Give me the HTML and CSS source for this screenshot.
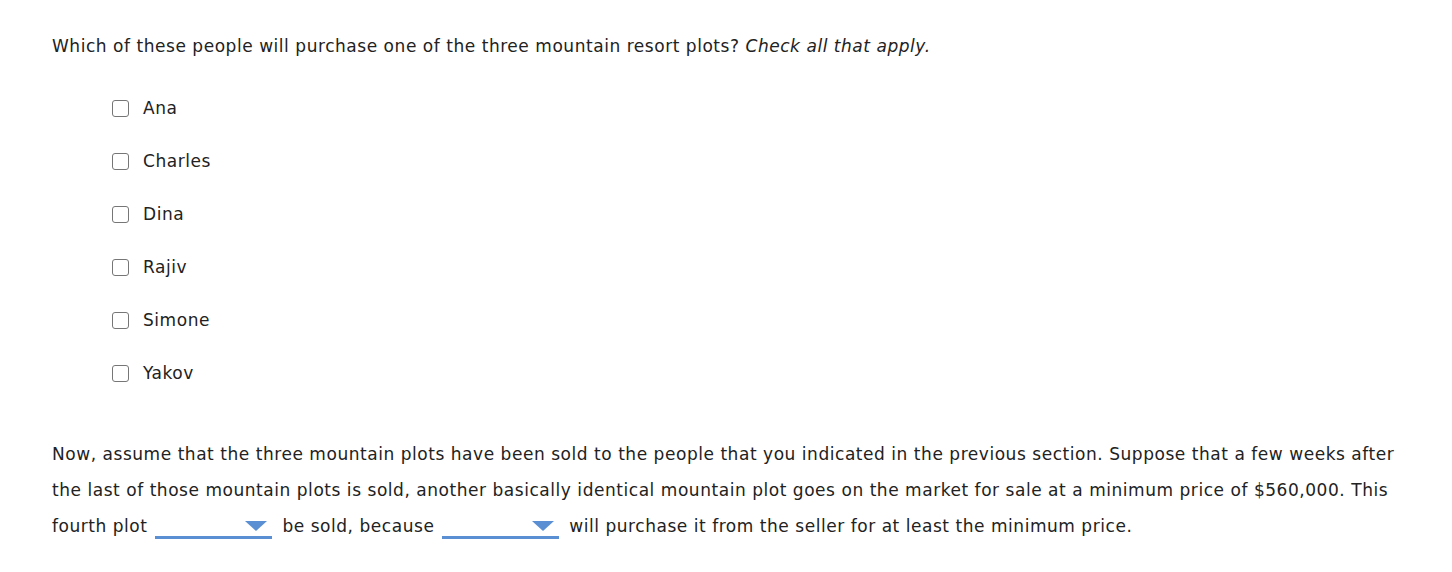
FILE: index.html
```html
<!DOCTYPE html>
<html lang="en">
<head>
  <meta charset="UTF-8">
  <title>Mountain plots</title>
  <link rel="stylesheet" href="styles.css">
</head>
<body>

<div class="question">
  <p class="prompt">Which of these people will purchase one of the three mountain resort plots? <em>Check all that apply.</em></p>

  <ul class="choices">
    <li><label><span class="box"></span>Ana</label></li>
    <li><label><span class="box"></span>Charles</label></li>
    <li><label><span class="box"></span>Dina</label></li>
    <li><label><span class="box"></span>Rajiv</label></li>
    <li><label><span class="box"></span>Simone</label></li>
    <li><label><span class="box"></span>Yakov</label></li>
  </ul>

  <p class="follow">
    Now, assume that the three mountain plots have been sold to the people that you indicated in the previous section. Suppose that a few weeks after the last of those mountain plots is sold, another basically identical mountain plot goes on the market for sale at a minimum price of $560,000. This fourth plot
    <span class="select"><span class="arrow"></span></span>
    be sold, because
    <span class="select"><span class="arrow"></span></span>
    will purchase it from the seller for at least the minimum price.
  </p>
</div>

</body>
</html>
```

FILE: styles.css
```css
* {
  box-sizing: border-box;
  margin: 0;
  padding: 0;
}

body {
  font-family: 'DejaVu Sans', Verdana, sans-serif;
  font-size: 17px;
  letter-spacing: 0.54px;
  color: #222;
  background: #fff;
}

.question {
  padding: 34px 0 0 52px;
  width: 1410px;
}

.prompt {
  line-height: 24px;
}

.choices {
  list-style: none;
  padding: 40px 0 0 60px;
}

.choices li {
  height: 53px;
}

.choices label {
  display: flex;
  align-items: center;
  height: 20px;
}

.box {
  width: 17px;
  height: 17px;
  border: 1px solid #767676;
  border-radius: 3px;
  margin-right: 14px;
}

.follow {
  margin-top: 20px;
  line-height: 36px;
}

.select {
  display: inline-block;
  position: relative;
  width: 117px;
  height: 22px;
  border-bottom: 3px solid #5b8fd3;
  vertical-align: -7px;
  margin: 0 4px 0 2px;
}

.arrow {
  position: absolute;
  right: 5px;
  top: 4px;
  width: 0;
  height: 0;
  border-left: 11px solid transparent;
  border-right: 11px solid transparent;
  border-top: 10px solid #5b8fd3;
}
```
